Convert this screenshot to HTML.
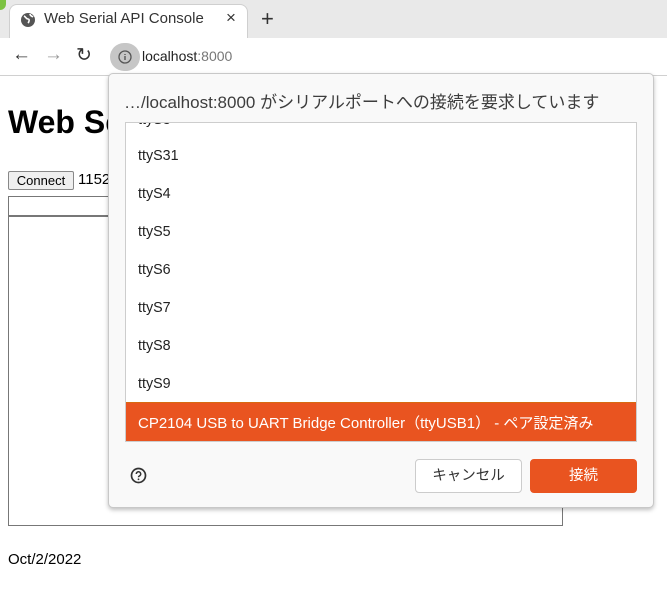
<!DOCTYPE html>
<html><head><meta charset="utf-8"><style>
*{box-sizing:border-box}
body{margin:0;width:667px;height:594px;overflow:hidden;background:#fff;font-family:"Liberation Sans","Noto Sans CJK JP",sans-serif;position:relative}
.abs{position:absolute}
.tabs{left:0;top:0;width:667px;height:38px;background:#e9e9e9}
.tab{left:9px;top:4px;width:239px;height:34px;background:#fff;border:1px solid #cfcfcf;border-bottom:none;border-radius:8px 8px 0 0;}
.toolbar{left:0;top:38px;width:667px;height:38px;background:#fff;border-bottom:1px solid #d0d0d0}
.dialog{left:108px;top:73px;width:546px;height:435px;background:#f9f9f9;border:1px solid #c8c8c8;border-radius:5px;box-shadow:0 2px 4px rgba(0,0,0,.25)}
.list{left:16px;top:48px;width:512px;height:320px;background:#fff;border:1px solid #cdcdcd;overflow:hidden}
.item{position:absolute;left:12px;font-size:14.3px;color:#222}
</style></head><body>
<div class="abs tabs"></div>
<div class="abs" style="left:0;top:0;width:6px;height:10px;background:#7cc242;border-radius:0 0 6px 0"></div>
<div class="abs tab"></div>
<svg class="abs" style="left:20px;top:12px" width="16" height="16" viewBox="0 0 16 16"><circle cx="8" cy="8" r="7" fill="#555"/><path d="M4 4c2 1 2 3 4 3s1 3 0 4M10 2c0 2 2 2 3 3" stroke="#fff" stroke-width="1.6" fill="none"/></svg>
<div class="abs" style="left:44px;top:10px;font-size:15px;color:#333">Web Serial API Console</div>
<div class="abs" style="left:226px;top:8px;font-size:17px;color:#333">×</div>
<div class="abs" style="left:261px;top:6px;font-size:22px;color:#333">+</div>
<div class="abs toolbar"></div>
<div class="abs" style="left:12px;top:44px;font-size:19px;color:#333">←</div>
<div class="abs" style="left:44px;top:44px;font-size:19px;color:#999">→</div>
<div class="abs" style="left:76px;top:44px;font-size:19px;color:#333">↻</div>
<div class="abs" style="left:110px;top:43px;width:30px;height:28px;border-radius:14px;background:#c6c6c6"></div>
<svg class="abs" style="left:118px;top:50px" width="14" height="14" viewBox="0 0 14 14"><circle cx="7" cy="7" r="6" fill="none" stroke="#555" stroke-width="1.3"/><path d="M7 6v4M7 4v1" stroke="#555" stroke-width="1.4"/></svg>
<div class="abs" style="left:142px;top:48px;font-size:14px;color:#222">localhost<span style="color:#777">:8000</span></div>

<div class="abs" style="left:8px;top:104px;font-size:32px;font-weight:bold;color:#000">Web Serial</div>
<div class="abs" style="left:8px;top:171px;width:66px;height:19px;border:1px solid #888;border-radius:2px;background:#efefef;font-size:13px;text-align:center;line-height:17px">Connect</div>
<div class="abs" style="left:78px;top:171px;font-size:15px">115200</div>
<div class="abs" style="left:8px;top:196px;width:555px;height:20px;border:1px solid #777"></div>
<div class="abs" style="left:8px;top:216px;width:555px;height:310px;border:1px solid #777"></div>
<div class="abs" style="left:8px;top:551px;font-size:15px">Oct/2/2022</div>

<div class="abs dialog">
 <div class="abs" style="left:15px;top:14px;font-size:17px;color:#3d3d3d">…/localhost:8000 がシリアルポートへの接続を要求しています</div>
 <div class="abs list">
  <div class="item" style="top:-11px">ttyS3</div>
  <div class="item" style="top:25px">ttyS31</div>
  <div class="item" style="top:63px">ttyS4</div>
  <div class="item" style="top:101px">ttyS5</div>
  <div class="item" style="top:139px">ttyS6</div>
  <div class="item" style="top:177px">ttyS7</div>
  <div class="item" style="top:215px">ttyS8</div>
  <div class="item" style="top:253px">ttyS9</div>
  <div class="abs" style="left:0;top:279px;width:512px;height:40px;background:#e95420;border-top:1px solid #d86a10"></div>
  <div class="item" style="top:289px;color:#fff;font-size:15px">CP2104 USB to UART Bridge Controller（ttyUSB1） - ペア設定済み</div>
 </div>
 <svg class="abs" style="left:21px;top:393px" width="17" height="17" viewBox="0 0 17 17"><circle cx="8.5" cy="8.5" r="7" fill="none" stroke="#333" stroke-width="1.7"/><path d="M6.3 7a2.2 2.2 0 1 1 3 2c-.6.3-.8.7-.8 1.3" fill="none" stroke="#333" stroke-width="1.5"/><circle cx="8.5" cy="12.3" r=".9" fill="#333"/></svg>
 <div class="abs" style="left:306px;top:385px;width:107px;height:34px;background:#fff;border:1px solid #ccc;border-radius:4px;text-align:center;line-height:32px;font-size:14.5px;color:#333">キャンセル</div>
 <div class="abs" style="left:421px;top:385px;width:107px;height:34px;background:#e95420;border-radius:4px;text-align:center;line-height:34px;font-size:14.5px;color:#fff">接続</div>
</div>
</body></html>
